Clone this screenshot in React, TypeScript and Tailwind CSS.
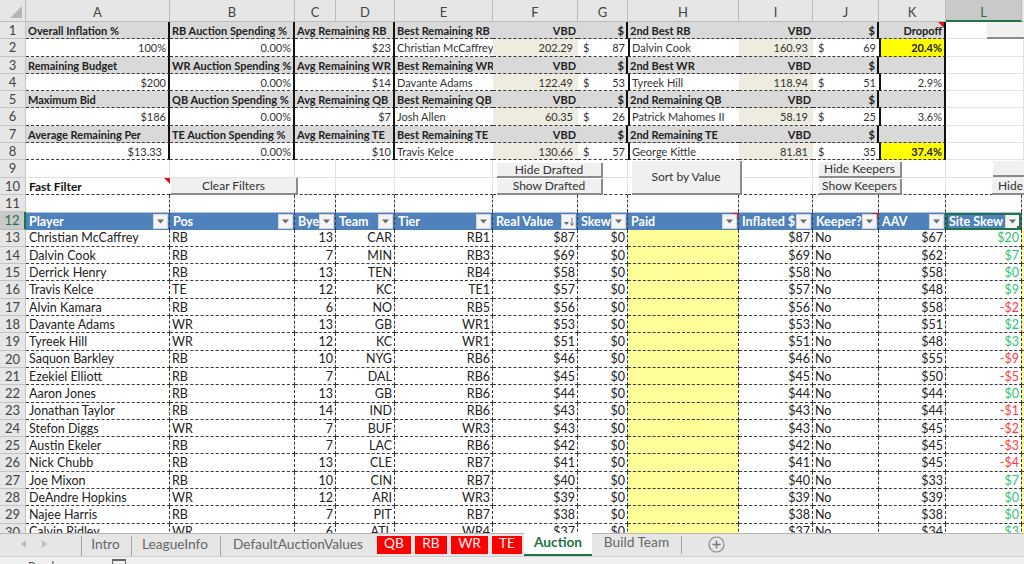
import React from 'react';
import clsx from 'clsx';

const COLS = ['A', 'B', 'C', 'D', 'E', 'F', 'G', 'H', 'I', 'J', 'K', 'L'];

const topBlocks = [
  {
    labels: ['Overall Inflation %', 'RB Auction Spending %', 'Avg Remaining RB', 'Best Remaining RB', '2nd Best RB', 'Dropoff'],
    values: ['100%', '0.00%', '$23', 'Christian McCaffrey', '202.29', '87', 'Dalvin Cook', '160.93', '69', '20.4%'],
    hot: true,
  },
  {
    labels: ['Remaining Budget', 'WR Auction Spending %', 'Avg Remaining WR', 'Best Remaining WR', '2nd Best WR', ''],
    values: ['$200', '0.00%', '$14', 'Davante Adams', '122.49', '53', 'Tyreek Hill', '118.94', '51', '2.9%'],
    hot: false,
  },
  {
    labels: ['Maximum Bid', 'QB Auction Spending %', 'Avg Remaining QB', 'Best Remaining QB', '2nd Remaining QB', ''],
    values: ['$186', '0.00%', '$7', 'Josh Allen', '60.35', '26', 'Patrick Mahomes II', '58.19', '25', '3.6%'],
    hot: false,
  },
  {
    labels: ['Average Remaining Per', 'TE Auction Spending %', 'Avg Remaining TE', 'Best Remaining TE', '2nd Remaining TE', ''],
    values: ['$13.33', '0.00%', '$10', 'Travis Kelce', '130.66', '57', 'George Kittle', '81.81', '35', '37.4%'],
    hot: true,
  },
];

const tableHeaders = ['Player', 'Pos', 'Bye', 'Team', 'Tier', 'Real Value', 'Skew', 'Paid', 'Inflated $', 'Keeper?', 'AAV', 'Site Skew'];

const players: [string, string, number, string, string, number, number, number][] = [
  ['Christian McCaffrey', 'RB', 13, 'CAR', 'RB1', 87, 67, 20],
  ['Dalvin Cook', 'RB', 7, 'MIN', 'RB3', 69, 62, 7],
  ['Derrick Henry', 'RB', 13, 'TEN', 'RB4', 58, 58, 0],
  ['Travis Kelce', 'TE', 12, 'KC', 'TE1', 57, 48, 9],
  ['Alvin Kamara', 'RB', 6, 'NO', 'RB5', 56, 58, -2],
  ['Davante Adams', 'WR', 13, 'GB', 'WR1', 53, 51, 2],
  ['Tyreek Hill', 'WR', 12, 'KC', 'WR1', 51, 48, 3],
  ['Saquon Barkley', 'RB', 10, 'NYG', 'RB6', 46, 55, -9],
  ['Ezekiel Elliott', 'RB', 7, 'DAL', 'RB6', 45, 50, -5],
  ['Aaron Jones', 'RB', 13, 'GB', 'RB6', 44, 44, 0],
  ['Jonathan Taylor', 'RB', 14, 'IND', 'RB6', 43, 44, -1],
  ['Stefon Diggs', 'WR', 7, 'BUF', 'WR3', 43, 45, -2],
  ['Austin Ekeler', 'RB', 7, 'LAC', 'RB6', 42, 45, -3],
  ['Nick Chubb', 'RB', 13, 'CLE', 'RB7', 41, 45, -4],
  ['Joe Mixon', 'RB', 10, 'CIN', 'RB7', 40, 33, 7],
  ['DeAndre Hopkins', 'WR', 12, 'ARI', 'WR3', 39, 39, 0],
  ['Najee Harris', 'RB', 7, 'PIT', 'RB7', 38, 38, 0],
  ['Calvin Ridley', 'WR', 6, 'ATL', 'WR4', 37, 34, 3],
];

const dashedBottom = 'border-b border-b-[#3a3a3a] [border-bottom-style:dashed]';
const dashedRight = 'border-r border-r-[#3a3a3a] [border-right-style:dashed]';
const thickRight = 'border-r-2 border-r-[#111]';
const lightGrid = 'border-b border-r border-[#e3e3e3]';

function Cell({ children, className, right }: { children?: React.ReactNode; className?: string; right?: boolean }) {
  return (
    <div className={clsx('relative flex min-w-0 items-center overflow-hidden whitespace-nowrap px-[2px] pt-[2px]', right && 'justify-end', className)}>
      {children}
    </div>
  );
}

function RowHead({ n, active }: { n: number; active?: boolean }) {
  return (
    <div
      className={clsx(
        'flex items-center justify-center border-b border-r pt-[1px] text-[13px]',
        active ? 'border-b-[#bbb] border-r-2 border-r-[#217346] bg-[#c9c9c9] text-[#217346]' : 'border-[#c4c4c4] bg-[#e6e6e6] text-[#444]'
      )}
    >
      {n}
    </div>
  );
}

function Corner() {
  return <span className="absolute right-0 top-0 h-0 w-0 border-l-[6px] border-t-[6px] border-l-transparent border-t-[#e0101a]" />;
}

function Label({ text, span, right, thick }: { text: string; span?: boolean; right?: boolean; thick?: boolean }) {
  return (
    <Cell right={right} className={clsx('bg-[#d9d9d9] text-[11px] font-bold text-[#222]', dashedBottom, span && 'col-span-2', thick && thickRight)}>
      {text}
    </Cell>
  );
}

function Value({ text, span, right, thick, className }: { text: string; span?: boolean; right?: boolean; thick?: boolean; className?: string }) {
  return (
    <Cell right={right} className={clsx('text-[11px] text-[#333]', dashedBottom, span && 'col-span-2', thick && thickRight, className)}>
      {text}
    </Cell>
  );
}

function Money({ amount }: { amount: string }) {
  return (
    <Cell className={clsx('justify-between pl-[5px] pr-[3px] text-[11px] text-[#333]', dashedBottom)}>
      <span>$</span>
      <span>{amount}</span>
    </Cell>
  );
}

function TopBlock({ labels, values, hot, first }: { labels: string[]; values: string[]; hot: boolean; first: number }) {
  return (
    <>
      <RowHead n={first} />
      <Label text={labels[0]} thick />
      <Label text={labels[1]} thick />
      <Label text={labels[2]} span thick />
      <Label text={labels[3]} />
      <Label text="VBD" right />
      <Label text="$" right thick />
      <Label text={labels[4]} />
      <Label text="VBD" right />
      <Label text="$" right thick />
      <Cell right className={clsx('bg-[#d9d9d9] text-[11px] font-bold text-[#222]', dashedBottom, thickRight)}>
        {labels[5]}
        {labels[5] && <Corner />}
      </Cell>
      <div className={clsx('col-span-2', lightGrid)} />

      <RowHead n={first + 1} />
      <Value text={values[0]} right thick className={values[0] === '$13.33' ? 'pr-[6px]' : ''} />
      <Value text={values[1]} right thick />
      <Value text={values[2]} right span thick />
      <Value text={values[3]} />
      <Value text={values[4]} right className="bg-[#eeece1] pr-[5px]" />
      <Money amount={values[5]} />
      <Value text={values[6]} className="border-l-2 border-l-[#111]" />
      <Value text={values[7]} right className="bg-[#eeece1] pr-[5px]" />
      <Money amount={values[8]} />
      <Cell right className={clsx('border-l-2 border-l-[#111] text-[11px]', dashedBottom, thickRight, hot ? 'bg-[#ffff00] font-bold text-[#222]' : 'text-[#333]')}>
        {values[9]}
      </Cell>
      <div className={clsx('col-span-2', lightGrid)} />
    </>
  );
}

function FilterButton({ sorted }: { sorted?: boolean }) {
  return (
    <span className="absolute right-[1px] top-[1px] flex h-[15px] w-[15px] items-center justify-center border border-[#d4d4d4] bg-[#f4f4f4]">
      {sorted ? (
        <svg width="12" height="10" viewBox="0 0 12 10">
          <path d="M1 5h5l-2.5 3z" fill="#666" />
          <path d="M9 1v7M7.5 6.5 9 8.5l1.5-2" fill="none" stroke="#666" strokeWidth="1" />
        </svg>
      ) : (
        <svg width="9" height="5" viewBox="0 0 9 5">
          <path d="M1 0.5h7L4.5 4.5z" fill="#6b6b6b" />
        </svg>
      )}
    </span>
  );
}

function PlayerRow({ row, n }: { row: (typeof players)[number]; n: number }) {
  const [name, pos, bye, team, tier, value, aav, skew] = row;
  const cell = clsx('text-[12.5px] text-[#222]', dashedBottom, dashedRight);
  return (
    <>
      <RowHead n={n} />
      <Cell className={clsx(cell, 'pl-[3px]')}>{name}</Cell>
      <Cell className={cell}>{pos}</Cell>
      <Cell right className={cell}>{bye}</Cell>
      <Cell right className={cell}>{team}</Cell>
      <Cell right className={cell}>{tier}</Cell>
      <Cell right className={cell}>${value}</Cell>
      <Cell right className={cell}>$0</Cell>
      <Cell className={clsx(cell, 'bg-[#ffff99]')} />
      <Cell right className={cell}>${value}</Cell>
      <Cell className={cell}>No</Cell>
      <Cell right className={cell}>${aav}</Cell>
      <Cell right className={clsx('text-[12.5px]', dashedBottom, dashedRight, skew < 0 ? 'text-[#ff3b3b]' : 'text-[#2fc46f]')}>
        {skew < 0 ? `-$${-skew}` : `$${skew}`}
      </Cell>
      <div className={clsx('bg-[#ffff99]', dashedBottom)} />
    </>
  );
}

function SheetButton({ label, className }: { label: string; className: string }) {
  return (
    <div className={clsx('absolute flex items-center justify-center overflow-hidden whitespace-nowrap border-b-2 border-r-2 border-b-[#8c8c8c] border-r-[#8c8c8c] bg-[#f0f0f0] text-[12px] text-[#333]', className)}>
      {label}
    </div>
  );
}

function Tab({ label, className }: { label: string; className?: string }) {
  return <div className={clsx('flex h-full items-center justify-center text-[13.7px] text-[#666]', className)}>{label}</div>;
}

function RedTab({ label, width }: { label: string; width: string }) {
  return <div className={clsx('mt-[2px] flex h-[18px] items-center justify-center bg-[#ff0000] pb-[3px] text-[13.7px] text-[#f4f4f4]', width)}>{label}</div>;
}

export default function App() {
  return (
    <div className="flex h-[564px] w-[1024px] flex-col overflow-hidden bg-white font-['Lato',sans-serif]">
      <div className="relative h-[533px] overflow-hidden">
        <div className="grid auto-rows-[17.3px] grid-cols-[26px_144px_125px_41px_59px_98px_85px_50px_111px_74px_66px_67px_76px_2px] grid-rows-[22px]">
          <div className="flex items-end justify-end border-b border-r border-[#bbb] bg-[#e6e6e6] p-[3px]">
            <span className="h-0 w-0 border-b-[12px] border-l-[12px] border-b-[#b5b5b5] border-l-transparent" />
          </div>
          {COLS.map((c) => (
            <div
              key={c}
              className={clsx(
                'flex items-center justify-center border-r pt-[5px] text-[13px]',
                c === 'L' ? 'border-b-2 border-b-[#217346] border-r-[#bbb] bg-[#c9c9c9] text-[#217346]' : 'border-b border-[#bbb] bg-[#e6e6e6] text-[#444]'
              )}
            >
              {c}
            </div>
          ))}
          <div className="border-b border-[#bbb] bg-[#e6e6e6]" />

          {topBlocks.map((b, i) => (
            <TopBlock key={i} labels={b.labels} values={b.values} hot={b.hot} first={i * 2 + 1} />
          ))}

          <RowHead n={9} />
          {COLS.map((c) => (
            <div key={c} className={lightGrid} />
          ))}
          <div />

          <RowHead n={10} />
          <Cell className={clsx('pl-[3px] text-[12px] font-bold text-[#111]', dashedBottom)}>
            Fast Filter
            <Corner />
          </Cell>
          {COLS.slice(1).map((c) => (
            <div key={c} className={clsx('border-r border-r-[#e3e3e3]', dashedBottom)} />
          ))}
          <div />

          <RowHead n={11} />
          {COLS.map((c) => (
            <div key={c} className={dashedRight} />
          ))}
          <div />

          <RowHead n={12} active />
          {tableHeaders.map((h) => (
            <Cell key={h} className={clsx('border-t border-t-[#a9c2e0] bg-[#4f81bd] pl-[3px] text-[12.5px] font-bold text-white', dashedRight)}>
              {h}
              {(h === 'Paid' || h === 'Keeper?' || h === 'Site Skew') && <Corner />}
              <FilterButton sorted={h === 'Real Value'} />
              {h === 'Site Skew' && (
                <>
                  <span className="absolute inset-0 border-2 border-[#217346]" />
                  <span className="absolute bottom-0 right-0 h-[4px] w-[4px] bg-[#217346]" />
                </>
              )}
            </Cell>
          ))}
          <div />

          {players.map((row, i) => (
            <PlayerRow key={row[0]} row={row} n={i + 13} />
          ))}
        </div>

        <SheetButton label="Clear Filters" className="left-[171px] top-[178px] h-[17px] w-[127px]" />
        <SheetButton label="Hide Drafted" className="left-[497px] top-[163px] h-[15px] w-[106px]" />
        <SheetButton label="Show Drafted" className="left-[497px] top-[179px] h-[16px] w-[106px]" />
        <SheetButton label="Sort by Value" className="left-[632px] top-[161px] h-[34px] w-[110px]" />
        <SheetButton label="Hide Keepers" className="left-[819px] top-[162px] h-[16px] w-[83px]" />
        <SheetButton label="Show Keepers" className="left-[819px] top-[179px] h-[16px] w-[83px]" />
        <SheetButton label="" className="left-[993px] top-[161px] h-[16px] w-[40px]" />
        <SheetButton label="" className="left-[987px] top-[22px] h-[17px] w-[40px]" />
        <SheetButton label="Hide" className="left-[992px] top-[179px] h-[16px] w-[44px] justify-start pl-[6px]" />
      </div>

      <div className="flex h-[23px] items-stretch border-t border-[#b5b5b5] bg-[#e6e6e6]">
        <div className="flex w-[81px] items-center gap-[16px] pl-[21px] pb-[2px] text-[#bdbdbd]">
          <span className="h-0 w-0 border-b-[4px] border-r-[5px] border-t-[4px] border-b-transparent border-r-[#bdbdbd] border-t-transparent" />
          <span className="h-0 w-0 border-b-[4px] border-l-[5px] border-t-[4px] border-b-transparent border-l-[#bdbdbd] border-t-transparent" />
        </div>
        <Tab label="Intro" className="my-[2px] w-[50px] border-l border-[#a6a6a6] pb-[6px] pr-[2px]" />
        <Tab label="LeagueInfo" className="my-[2px] w-[89px] border-l border-[#a6a6a6] pb-[6px] pr-[2px]" />
        <Tab label="DefaultAuctionValues" className="my-[2px] w-[157px] border-l border-[#a6a6a6] pb-[6px] pr-[2px]" />
        <div className="flex items-start gap-[4px]">
          <RedTab label="QB" width="w-[34px]" />
          <RedTab label="RB" width="w-[32px]" />
          <RedTab label="WR" width="w-[37px]" />
          <RedTab label="TE" width="w-[30px]" />
        </div>
        <div className="-mt-px ml-[2px] flex w-[68px] items-center justify-center border-b-2 border-b-[#217346] bg-white pb-[3px] text-[13.7px] font-bold text-[#217346]">
          Auction
        </div>
        <Tab label="Build Team" className="w-[89px] pb-[5px]" />
        <div className="my-[2px] border-l border-[#a6a6a6]" />
        <div className="ml-[26px] flex items-center pb-[1px]">
          <svg width="17" height="17" viewBox="0 0 17 17">
            <circle cx="8.5" cy="8.5" r="7.5" fill="none" stroke="#8a8a8a" strokeWidth="1.2" />
            <path d="M8.5 4.5v8M4.5 8.5h8" stroke="#777" strokeWidth="1.4" />
          </svg>
        </div>
      </div>

      <div className="relative h-[8px] overflow-hidden border-t border-[#d0d0d0] bg-[#f0f0f0]">
        <span className="absolute left-[28px] top-[3px] text-[12px] leading-none text-[#555]">Ready</span>
        <span className="absolute left-[112px] top-[2px] h-[8px] w-[14px] border border-[#666] border-t-2" />
      </div>
    </div>
  );
}
